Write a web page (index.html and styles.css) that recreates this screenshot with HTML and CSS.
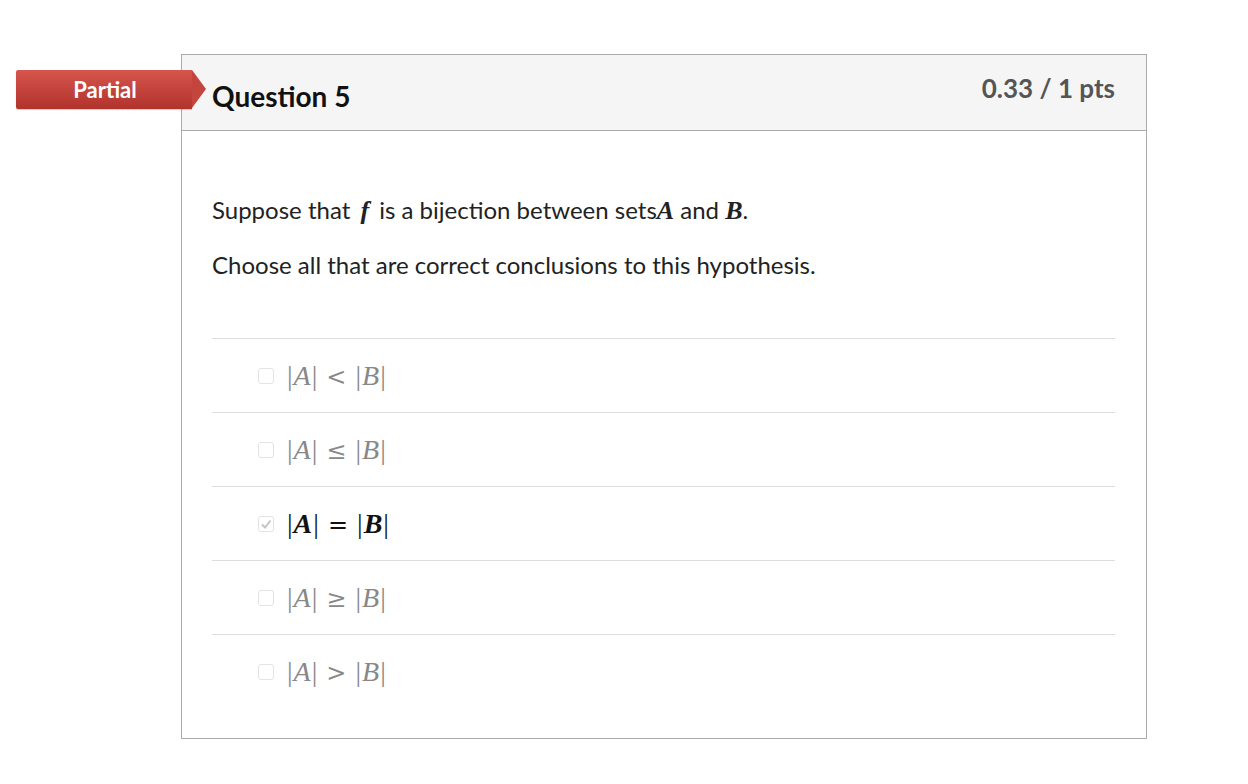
FILE: index.html
```html
<!DOCTYPE html>
<html>
<head>
<meta charset="utf-8">
<link rel="stylesheet" href="styles.css">
</head>
<body>
<div class="page">
  <div class="card">
    <div class="tag">Partial</div>
    <div class="header">
      <h2 class="title">Question 5</h2>
      <div class="pts">0.33 / 1 pts</div>
    </div>
    <div class="body">
      <p class="text">Suppose that <span class="m f">f</span> is a bijection between sets<span class="m">A</span> and <span class="m">B</span>.</p>
      <p class="text">Choose all that are correct conclusions to this hypothesis.</p>
      <div class="answers">
        <div class="answer"><span class="box"></span><span class="math">|<i>A</i>|<span class="rel">&lt;</span>|<i>B</i>|</span></div>
        <div class="answer"><span class="box"></span><span class="math">|<i>A</i>|<span class="rel">≤</span>|<i>B</i>|</span></div>
        <div class="answer checked"><span class="box"><svg width="12" height="12" viewBox="0 0 12 12"><path d="M2 6.5 L5 9.5 L10.5 2.5" fill="none" stroke="#c4c4c4" stroke-width="2"/></svg></span><span class="math">|<i>A</i>|<span class="rel">=</span>|<i>B</i>|</span></div>
        <div class="answer"><span class="box"></span><span class="math">|<i>A</i>|<span class="rel">≥</span>|<i>B</i>|</span></div>
        <div class="answer last"><span class="box"></span><span class="math">|<i>A</i>|<span class="rel">&gt;</span>|<i>B</i>|</span></div>
      </div>
    </div>
  </div>
</div>
</body>
</html>
```
FILE: styles.css
```css
html, body { margin: 0; padding: 0; background: #fff; }
body { font-family: Lato, "Open Sans", sans-serif; color: #222; }
.page { padding: 54px 0 0 181px; }
.card {
  position: relative;
  width: 964px;
  border: 1px solid #aaa;
}
.tag {
  position: absolute;
  left: -166px;
  top: 15px;
  width: 176px;
  height: 39px;
  background: linear-gradient(#d6554d, #b0332c);
  color: #fff;
  font-weight: bold;
  font-size: 22px;
  line-height: 39px;
  text-align: center;
  padding-left: 2px;
  box-sizing: border-box;
  border-radius: 2px 0 0 2px;
  box-shadow: 0 1px 1px rgba(0,0,0,0.2);
}
.tag::after {
  content: "";
  position: absolute;
  right: -14px;
  top: 0;
  border-left: 14px solid #c4453d;
  border-top: 19.5px solid transparent;
  border-bottom: 19.5px solid transparent;
}
.header {
  height: 75px;
  background: #f5f5f5;
  border-bottom: 1px solid #aaa;
  display: flex;
  justify-content: space-between;
  padding: 0 31px 0 30px;
}
.title {
  margin: 24px 0 0;
  font-size: 28px;
  line-height: 34px;
  font-weight: bold;
  color: #111;
}
.pts {
  margin-top: 17px;
  font-size: 26px;
  line-height: 32px;
  font-weight: bold;
  color: #555;
}
.body { padding: 64px 31px 30px 30px; }
.text {
  margin: 0 0 24px;
  font-size: 24px;
  line-height: 30px;
  color: #222;
}
.m {
  font-family: "Liberation Serif", "DejaVu Serif", serif;
  font-style: italic;
  font-weight: bold;
  font-size: 26px;
}
.m.f { margin: 0 4px; }
.answers { margin-top: 58px; }
.answer {
  height: 73px;
  border-top: 1px solid #ddd;
  display: flex;
  align-items: center;
  padding-left: 46px;
}
.box {
  width: 14px;
  height: 14px;
  border: 1px solid #e3e3e3;
  border-radius: 3px;
  margin-right: 13px;
  display: flex;
  align-items: center;
  justify-content: center;
  background: #fff;
}
.math {
  font-family: "Liberation Serif", "DejaVu Serif", serif;
  font-size: 28px;
  color: #888;
  white-space: pre;
}
.math i { font-style: italic; padding: 0 1px; }
.rel {
  font-family: "DejaVu Serif", serif;
  font-size: 24px;
  margin: 0 9px;
}
.checked .math { color: #111; }
.checked .math i { font-weight: bold; }
```
